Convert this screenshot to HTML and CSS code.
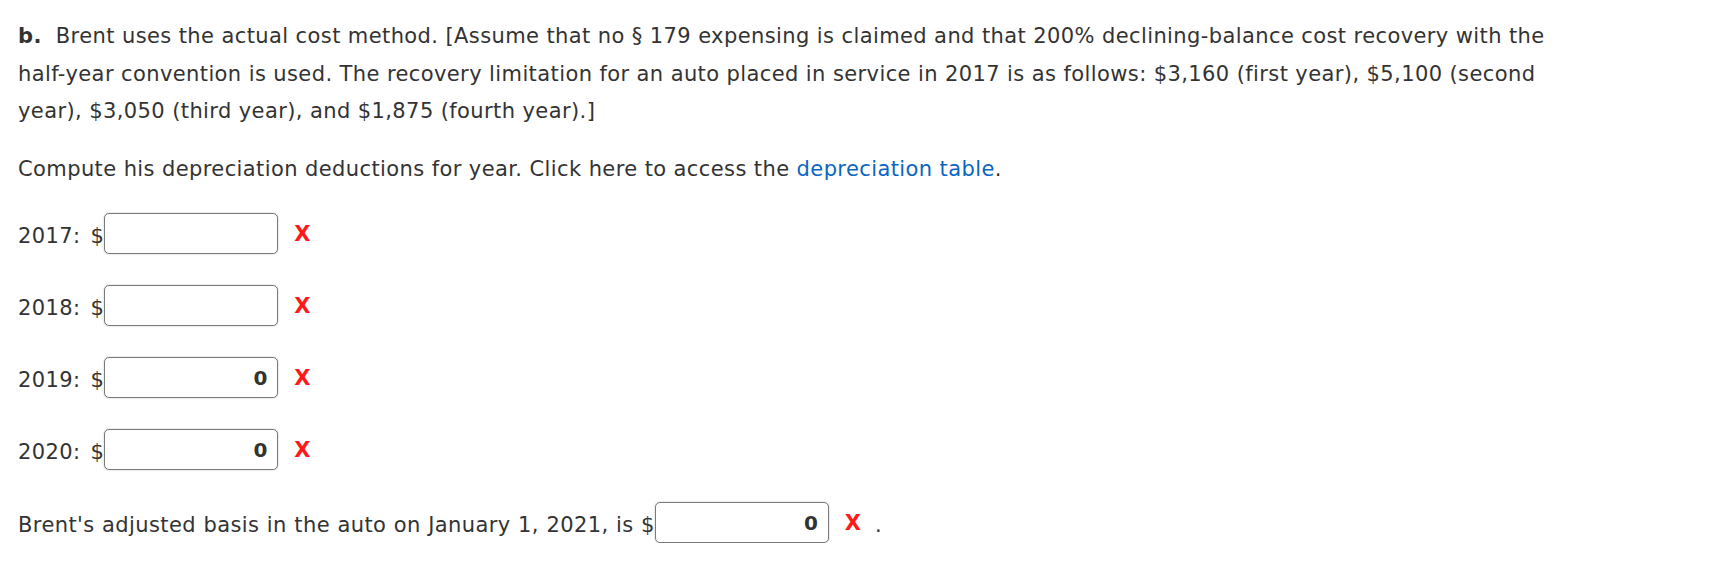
FILE: index.html
```html
<!DOCTYPE html>
<html>
<head>
<meta charset="utf-8">
<link rel="stylesheet" href="styles.css">
</head>
<body>
<div class="page">
  <p class="intro"><b class="part">b.</b>Brent uses the actual cost method. [Assume that no § 179 expensing is claimed and that 200% declining-balance cost recovery with the half-year convention is used. The recovery limitation for an auto placed in service in 2017 is as follows: $3,160 (first year), $5,100 (second year), $3,050 (third year), and $1,875 (fourth year).]</p>
  <p class="prompt">Compute his depreciation deductions for year. Click here to access the <a class="link" href="#">depreciation table</a>.</p>
  <div class="row first">
    <span class="label year">2017: $</span><span class="field"></span><span class="mark">X</span>
  </div>
  <div class="row">
    <span class="label year">2018: $</span><span class="field"></span><span class="mark">X</span>
  </div>
  <div class="row">
    <span class="label year">2019: $</span><span class="field">0</span><span class="mark">X</span>
  </div>
  <div class="row">
    <span class="label year">2020: $</span><span class="field">0</span><span class="mark">X</span>
  </div>
  <div class="row last">
    <span class="label basis">Brent's adjusted basis in the auto on January 1, 2021, is $</span><span class="field">0</span><span class="mark">X</span><span class="dot">.</span>
  </div>
</div>
</body>
</html>
```

FILE: styles.css
```css
html, body {
  margin: 0;
  padding: 0;
  background: #fff;
}
.page {
  padding: 18px 0 0 18px;
  font-family: "DejaVu Sans", Verdana, sans-serif;
  font-size: 21px;
  letter-spacing: 0.4px;
  line-height: 37.5px;
  color: #333;
}
.intro {
  margin: 0;
  width: 1556px;
}
.part {
  font-weight: bold;
  display: inline-block;
  margin-right: 14px;
}
.prompt {
  margin: 20px 0 0 0;
}
.link {
  color: #0a66c2;
  text-decoration: none;
}
.row {
  display: flex;
  align-items: center;
  height: 41px;
  margin-top: 31px;
}
.row.first {
  margin-top: 25px;
}
.row.last {
  margin-top: 32px;
}
.label {
  line-height: 24px;
  padding-top: 5px;
  white-space: nowrap;
}
.label.year {
  word-spacing: 3px;
}
.label.basis {
  word-spacing: 0.4px;
}
.field {
  box-sizing: border-box;
  width: 174px;
  height: 41px;
  border: 1px solid #7a7a7a;
  border-radius: 5px;
  box-shadow: 0 0 2px rgba(0, 0, 0, 0.25);
  background: #fff;
  display: flex;
  align-items: center;
  justify-content: flex-end;
  padding-right: 10px;
  font-weight: bold;
  font-size: 20px;
  letter-spacing: 0;
  line-height: 24px;
  color: #333;
}
.mark {
  margin-left: 16px;
  color: #ff1a1a;
  font-weight: bold;
  font-size: 21px;
  letter-spacing: 0;
  line-height: 24px;
}
.dot {
  margin-left: 14px;
  line-height: 24px;
  padding-top: 5px;
}
```
